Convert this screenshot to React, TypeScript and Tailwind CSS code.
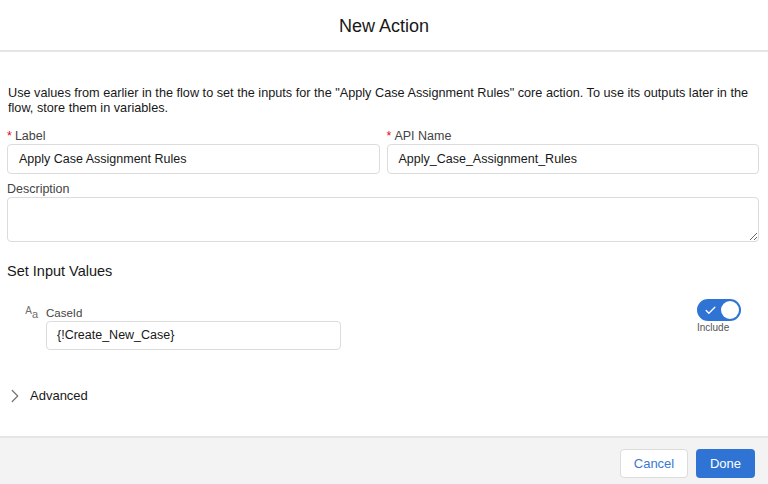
import React from 'react';
import { Check, ChevronRight } from 'lucide-react';

const font = { fontFamily: '"Liberation Sans", Arial, sans-serif' };

function FieldLabel({ text, required }: { text: string; required?: boolean }) {
  return (
    <div className="h-[15px] text-[12.5px] leading-[15px] text-[#444444]">
      {required && <span className="mr-[3px] text-[#ea001e]">*</span>}
      {text}
    </div>
  );
}

function TextBox({ value }: { value: string }) {
  return (
    <div className="flex h-[30px] items-center rounded-[4px] border border-[#dcdcdc] bg-white px-[11px] text-[12.5px] text-[#181818]">
      {value}
    </div>
  );
}

export default function App() {
  return (
    <div className="flex h-[484px] w-[768px] flex-col bg-white" style={font}>
      {/* Header */}
      <div className="flex h-[52px] shrink-0 items-center justify-center border-b-2 border-[#e5e5e5] pt-[2px]">
        <h1 className="text-[18px] text-[#181818]">New Action</h1>
      </div>

      {/* Body */}
      <div className="flex-1 pl-[7px] pr-[9px] pt-[34px]">
        <p className="pl-[1px] text-[12.7px] leading-[15px] text-[#181818]">
          Use values from earlier in the flow to set the inputs for the "Apply Case Assignment Rules" core action. To use its outputs later in the
          <br />
          flow, store them in variables.
        </p>

        <div className="mt-[13px] grid grid-cols-2 gap-[7px]">
          <div>
            <FieldLabel text="Label" required />
            <TextBox value="Apply Case Assignment Rules" />
          </div>
          <div>
            <FieldLabel text="API Name" required />
            <TextBox value="Apply_Case_Assignment_Rules" />
          </div>
        </div>

        <div className="mt-[8px]">
          <FieldLabel text="Description" />
          <textarea
            className="block h-[45px] w-full rounded-[4px] border border-[#dcdcdc] bg-white outline-none"
            defaultValue=""
          />
        </div>

        <h2 className="mt-[19px] h-[20px] text-[14.5px] leading-[20px] text-[#181818]">Set Input Values</h2>

        {/* Input row */}
        <div className="mt-[18px] flex items-start justify-between pr-[18px]">
          <div className="mt-[7px] flex">
            <div className="flex w-[39px] justify-end pr-[8px] text-[#706e6b]">
              <span className="text-[10px] leading-[10px]">A</span>
              <span className="relative top-[3px] text-[11px] leading-[10px]">a</span>
            </div>
            <div className="w-[295px]">
              <div className="h-[14px] text-[11.5px] leading-[14px] text-[#444444]">CaseId</div>
              <div className="mt-[1px] flex h-[29px] items-center rounded-[4px] border border-[#dcdcdc] bg-white px-[10px] text-[12.5px] text-[#181818]">
                {'{!Create_New_Case}'}
              </div>
            </div>
          </div>
          <div className="flex flex-col items-start">
            <div className="flex h-[22px] w-[44px] items-center justify-between rounded-full bg-[#2f74d5] pl-[7px] pr-[2px]">
              <Check size={13} strokeWidth={2.5} className="text-white" />
              <div className="h-[18px] w-[18px] rounded-full bg-white" />
            </div>
            <div className="mt-[1px] text-[10px] leading-[12px] text-[#555555]">Include</div>
          </div>
        </div>

        {/* Advanced */}
        <div className="mt-[36px] flex h-[20px] items-center">
          <ChevronRight size={22} strokeWidth={1.3} className="-ml-[3px] text-[#747474]" />
          <span className="ml-[4px] text-[13px] text-[#181818]">Advanced</span>
        </div>
      </div>

      {/* Footer */}
      <div className="flex h-[48px] shrink-0 items-start justify-end gap-[8px] border-t-2 border-[#e5e5e5] bg-[#f3f3f3] pr-[13px] pt-[11px]">
        <button className="h-[29px] w-[68px] rounded-[4px] border border-[#dcdcdc] bg-white text-[13px] text-[#3a78d4]">
          Cancel
        </button>
        <button className="h-[29px] w-[59px] rounded-[4px] bg-[#2f74d5] text-[13px] text-white">
          Done
        </button>
      </div>
    </div>
  );
}
